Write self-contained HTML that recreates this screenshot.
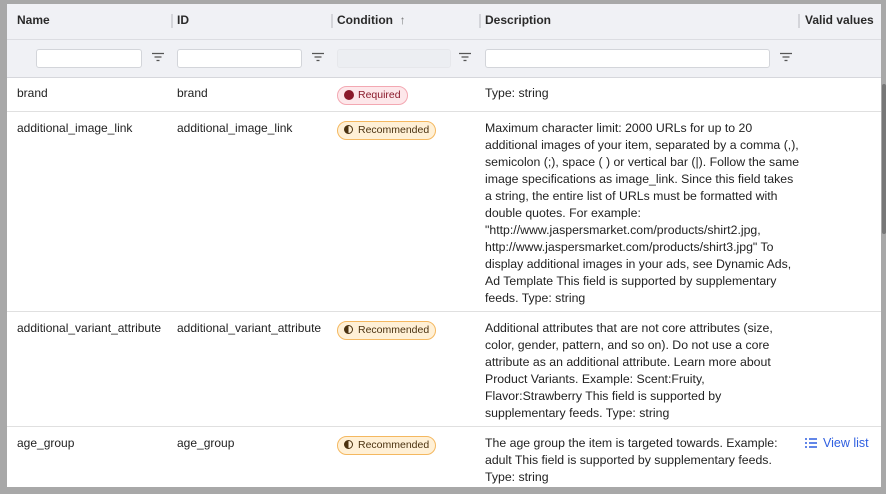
<!DOCTYPE html>
<html><head><style>
body{margin:0;width:886px;height:494px;background:#a8a8a8;position:relative;overflow:hidden;font-family:"Liberation Sans",Arial,sans-serif;font-size:12px;color:#222;}
#c{position:absolute;left:7px;top:4px;width:874px;height:483px;background:#fff;overflow:hidden;}
.hd{position:absolute;left:0;top:0;width:874px;height:35px;background:#f0f1f5;border-bottom:1px solid #dcdde2;}
.fl{position:absolute;left:0;top:36px;width:874px;height:37px;background:#f0f1f5;border-bottom:1px solid #d6d7dc;}
.h{position:absolute;top:9px;font-weight:bold;font-size:12px;color:#2a2a2a;}
.sep{position:absolute;top:10px;width:2px;height:14px;background:#d4d5da;}
.in{position:absolute;top:9px;height:17px;background:#fff;border:1px solid #d3d5da;border-radius:3px;}
.fi{position:absolute;top:12px;width:12px;}
.r{position:absolute;left:0;width:874px;border-bottom:1px solid #e0e0e0;}
.t{position:absolute;line-height:17px;}
.d{font-size:12.3px;white-space:nowrap;}
.b{position:absolute;height:17px;border-radius:10px;font-size:10.5px;line-height:17px;padding:0 6px 0 20px;}
.req{background:#fde7ea;border:1px solid #f3a8b2;color:#8a1a2b;}
.rec{background:#fff0d6;border:1px solid #f4b860;color:#4b3210;}
.dot{position:absolute;left:6px;top:3px;width:10px;height:10px;border-radius:50%;}
.sb{position:absolute;left:882px;top:84px;width:4px;height:150px;background:#777;border-radius:2px;}
</style></head><body>
<div id="c">
<div class="hd">
<div class="h" style="left:10px">Name</div>
<div class="sep" style="left:164px"></div><div class="h" style="left:170px">ID</div>
<div class="sep" style="left:324px"></div><div class="h" style="left:330px">Condition&nbsp; <span style="font-weight:normal;color:#777">↑</span></div>
<div class="sep" style="left:472px"></div><div class="h" style="left:478px">Description</div>
<div class="sep" style="left:791px"></div><div class="h" style="left:798px">Valid values</div>
</div>
<div class="fl">
<div class="in" style="left:29px;width:104px"></div>
<div class="in" style="left:170px;width:123px"></div>
<div class="in" style="left:330px;width:112px;background:#eceef2;border-color:#e6e7eb"></div>
<div class="in" style="left:478px;width:283px"></div>
<svg class="fi" style="left:145px" viewBox="0 0 12 10"><path d="M0 1.5H12M2.5 5H9.5M4.5 8.5H7.5" stroke="#555" stroke-width="1.3"/></svg>
<svg class="fi" style="left:305px" viewBox="0 0 12 10"><path d="M0 1.5H12M2.5 5H9.5M4.5 8.5H7.5" stroke="#555" stroke-width="1.3"/></svg>
<svg class="fi" style="left:452px" viewBox="0 0 12 10"><path d="M0 1.5H12M2.5 5H9.5M4.5 8.5H7.5" stroke="#555" stroke-width="1.3"/></svg>
<svg class="fi" style="left:773px" viewBox="0 0 12 10"><path d="M0 1.5H12M2.5 5H9.5M4.5 8.5H7.5" stroke="#555" stroke-width="1.3"/></svg>
</div>
<div class="r" style="top:74px;height:33px">
<div class="t" style="left:10px;top:7px">brand</div><div class="t" style="left:170px;top:7px">brand</div>
<div class="b req" style="left:330px;top:8px"><span class="dot" style="background:#8a1a2b"></span>Required</div>
<div class="t d" style="left:478px;top:7px">Type: string</div>
</div>
<div class="r" style="top:108px;height:199px">
<div class="t" style="left:10px;top:8px">additional_image_link</div><div class="t" style="left:170px;top:8px">additional_image_link</div>
<div class="b rec" style="left:330px;top:9px"><span class="dot" style="border:1.5px solid #4b3210;width:7px;height:7px;background:linear-gradient(90deg,#4b3210 50%,transparent 50%)"></span>Recommended</div>
<div class="t d" style="left:478px;top:8px">Maximum character limit: 2000 URLs for up to 20<br>additional images of your item, separated by a comma (,),<br>semicolon (;), space ( ) or vertical bar (|). Follow the same<br>image specifications as image_link. Since this field takes<br>a string, the entire list of URLs must be formatted with<br>double quotes. For example:<br>"http://www.jaspersmarket.com/products/shirt2.jpg,<br>http://www.jaspersmarket.com/products/shirt3.jpg" To<br>display additional images in your ads, see Dynamic Ads,<br>Ad Template This field is supported by supplementary<br>feeds. Type: string</div>
</div>
<div class="r" style="top:308px;height:114px">
<div class="t" style="left:10px;top:8px">additional_variant_attribute</div><div class="t" style="left:170px;top:8px">additional_variant_attribute</div>
<div class="b rec" style="left:330px;top:9px"><span class="dot" style="border:1.5px solid #4b3210;width:7px;height:7px;background:linear-gradient(90deg,#4b3210 50%,transparent 50%)"></span>Recommended</div>
<div class="t d" style="left:478px;top:8px">Additional attributes that are not core attributes (size,<br>color, gender, pattern, and so on). Do not use a core<br>attribute as an additional attribute. Learn more about<br>Product Variants. Example: Scent:Fruity,<br>Flavor:Strawberry This field is supported by<br>supplementary feeds. Type: string</div>
</div>
<div class="r" style="top:423px;height:70px;border:0">
<div class="t" style="left:10px;top:8px">age_group</div><div class="t" style="left:170px;top:8px">age_group</div>
<div class="b rec" style="left:330px;top:9px"><span class="dot" style="border:1.5px solid #4b3210;width:7px;height:7px;background:linear-gradient(90deg,#4b3210 50%,transparent 50%)"></span>Recommended</div>
<div class="t d" style="left:478px;top:8px">The age group the item is targeted towards. Example:<br>adult This field is supported by supplementary feeds.<br>Type: string</div>
<div class="t" style="left:798px;top:8px;color:#2f5fe0;font-size:12.5px"><svg width="12" height="10" viewBox="0 0 12 10" style="vertical-align:-1px;margin-right:6px"><path d="M0 1H2M4 1H12M0 5H2M4 5H12M0 9H2M4 9H12" stroke="#2f5fe0" stroke-width="1.5"/></svg>View list</div>
</div>
</div>
<div class="sb"></div>
</body></html>
